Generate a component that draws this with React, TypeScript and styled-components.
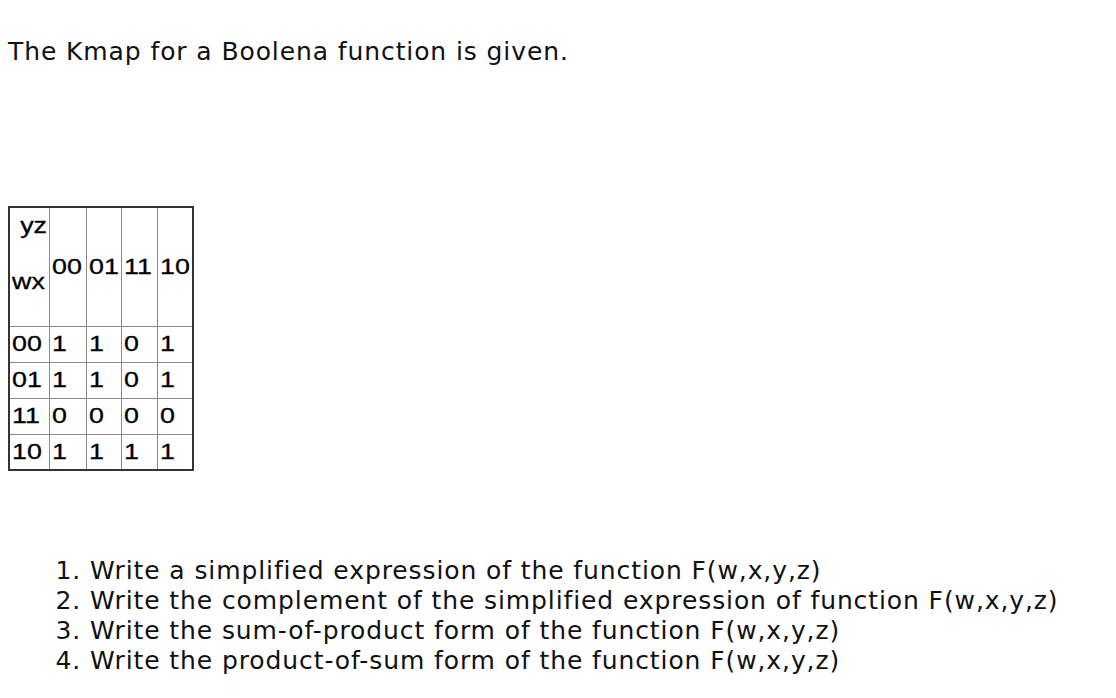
import React from "react";
import styled, { createGlobalStyle } from "styled-components";

const Global = createGlobalStyle`
  html, body { margin: 0; padding: 0; background: #fff; }
  body { color: #000; }
`;

const Page = styled.div`
  padding: 0 8px;
  font-family: "DejaVu Sans", Verdana, sans-serif;
  font-size: 25px;
  letter-spacing: 0.9px;
  color: #111;
`;

const Title = styled.p`
  margin: 0;
  padding-top: 37px;
  line-height: 30px;
`;

const KTable = styled.table`
  margin-top: 139px;
  border-collapse: collapse;
  border: 2px solid #333;
  font-family: "Liberation Sans", Arial, sans-serif;
  font-size: 22px;
  letter-spacing: 0;
  color: #000;
`;

const Cell = styled.td<{ $w: number }>`
  border: 1px solid #8a8a8a;
  width: ${(p) => p.$w}px;
  height: 36px;
  padding: 0 0 0 2px;
  box-sizing: border-box;
  vertical-align: middle;
  line-height: 26px;
  text-align: left;
  white-space: nowrap;
`;

const Corner = styled.td`
  border: 1px solid #8a8a8a;
  height: 119px;
  padding: 0 2px;
  box-sizing: border-box;
  vertical-align: top;
  line-height: 26px;
`;

const CornerTop = styled.div`
  text-align: right;
  margin-top: 5px;
`;

const CornerBottom = styled.div`
  text-align: left;
  margin-top: 30px;
`;

const Txt = styled.span<{ $right?: boolean }>`
  display: inline-block;
  transform: scaleX(1.22);
  transform-origin: ${(p) => (p.$right ? "right" : "left")} center;
  -webkit-text-stroke: 0.3px #000;
`;

const List = styled.ol`
  margin: 85px 0 0;
  padding-left: 82px;
  line-height: 30px;
`;

const widths = [40, 37, 35, 36, 36];
const cols = ["00", "01", "11", "10"];
const rows: [string, string[]][] = [
  ["00", ["1", "1", "0", "1"]],
  ["01", ["1", "1", "0", "1"]],
  ["11", ["0", "0", "0", "0"]],
  ["10", ["1", "1", "1", "1"]],
];

export default function App() {
  return (
    <>
      <Global />
      <Page>
        <Title>The Kmap for a Boolena function is given.</Title>
        <KTable>
          <tbody>
            <tr>
              <Corner>
                <CornerTop>
                  <Txt $right>yz</Txt>
                </CornerTop>
                <CornerBottom>
                  <Txt>wx</Txt>
                </CornerBottom>
              </Corner>
              {cols.map((c, i) => (
                <Cell key={c} $w={widths[i + 1]}>
                  <Txt>{c}</Txt>
                </Cell>
              ))}
            </tr>
            {rows.map(([h, vals]) => (
              <tr key={h}>
                <Cell $w={widths[0]}>
                  <Txt>{h}</Txt>
                </Cell>
                {vals.map((v, i) => (
                  <Cell key={i} $w={widths[i + 1]}>
                    <Txt>{v}</Txt>
                  </Cell>
                ))}
              </tr>
            ))}
          </tbody>
        </KTable>
        <List>
          <li>Write a simplified expression of the function F(w,x,y,z)</li>
          <li>Write the complement of the simplified expression of function F(w,x,y,z)</li>
          <li>Write the sum-of-product form of the function F(w,x,y,z)</li>
          <li>Write the product-of-sum form of the function F(w,x,y,z)</li>
        </List>
      </Page>
    </>
  );
}
